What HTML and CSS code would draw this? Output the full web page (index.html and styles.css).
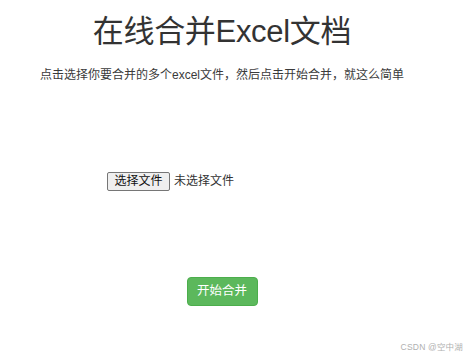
FILE: index.html
```html
<!DOCTYPE html>
<html lang="zh-CN">
<head>
<meta charset="utf-8">
<title>在线合并Excel文档</title>
<link rel="stylesheet" href="styles.css">
</head>
<body>
<div class="page">
  <h1 class="title">在线合并Excel文档</h1>
  <p class="intro">点击选择你要合并的多个excel文件，然后点击开始合并，就这么简单</p>
  <div class="file-row">
    <label class="file-input">
      <span class="file-btn">选择文件</span>
      <span class="file-name">未选择文件</span>
    </label>
  </div>
  <div class="action-row">
    <button class="merge-btn" type="button">开始合并</button>
  </div>
</div>
<div class="watermark">CSDN @空中湖</div>
</body>
</html>
```

FILE: styles.css
```css
html, body {
  margin: 0;
  padding: 0;
  background: #ffffff;
}
body {
  width: 474px;
  height: 359px;
  overflow: hidden;
  position: relative;
  font-family: "Liberation Sans", "Noto Sans CJK SC", sans-serif;
  color: #333333;
}
.page {
  width: 444px;
  display: flex;
  flex-direction: column;
  align-items: center;
  text-align: center;
}
.title {
  margin: 14px 0 0;
  font-size: 31px;
  line-height: 36px;
  font-weight: normal;
  color: #333333;
  letter-spacing: -0.3px;
}
.intro {
  margin: 17px 0 0;
  font-size: 12px;
  line-height: 16px;
  color: #3a3a3a;
}
.file-row {
  margin-top: 89px;
  width: 230px;
  display: flex;
}
.file-input {
  display: flex;
  align-items: center;
  gap: 4px;
  font-size: 12px;
}
.file-btn {
  box-sizing: border-box;
  height: 19px;
  padding: 0 6.5px;
  line-height: 17px;
  background: #efefef;
  border: 1px solid #767676;
  border-radius: 2px;
  color: #111111;
}
.file-name {
  color: #333333;
  line-height: 19px;
}
.action-row {
  margin-top: 86px;
  display: flex;
  justify-content: center;
}
.merge-btn {
  box-sizing: border-box;
  width: 71px;
  height: 29px;
  padding: 0;
  border: 1px solid #4cae4c;
  border-radius: 4px;
  background: #5cb85c;
  color: #ffffff;
  font-family: "Liberation Sans", "Noto Sans CJK SC", sans-serif;
  font-size: 12.5px;
  line-height: 27px;
}
.watermark {
  position: absolute;
  right: 11px;
  bottom: 7px;
  font-size: 8.5px;
  line-height: 10px;
  color: #b0b0b0;
  letter-spacing: 0.2px;
}
```
